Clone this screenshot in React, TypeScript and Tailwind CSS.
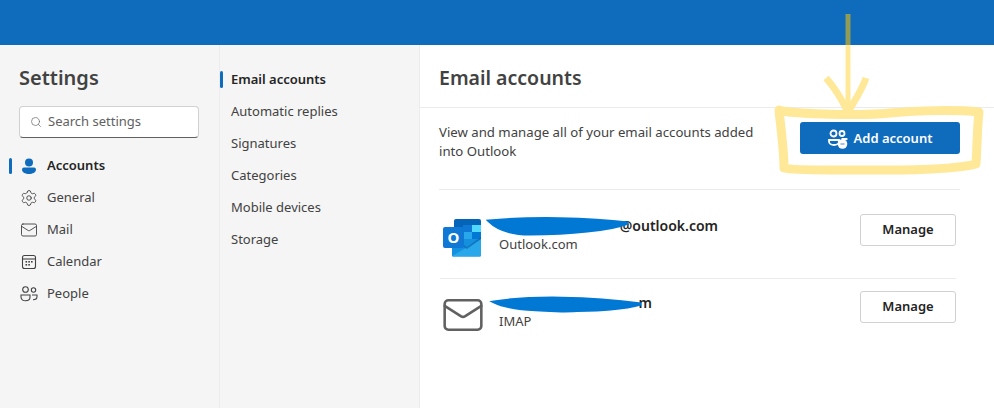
import { Search, Settings, Mail } from 'lucide-react'

const font = "font-['Noto_Sans',sans-serif]"

const CalendarIcon = () => (
  <svg viewBox="0 0 16 16" className="w-[16px] h-[16px]" fill="none" stroke="currentColor" strokeWidth="1.100">
    <rect x="1.500" y="1.500" width="13" height="13" rx="2" />
    <path d="M1.500 5 h13" />
    <g fill="currentColor" stroke="none">
      <rect x="4.500" y="7" width="1.600" height="1.600" />
      <rect x="7.300" y="7" width="1.600" height="1.600" />
      <rect x="10" y="7" width="1.600" height="1.600" />
      <rect x="4.500" y="10" width="1.600" height="1.600" />
      <rect x="7.300" y="10" width="1.600" height="1.600" />
    </g>
  </svg>
)

const PeopleIcon = () => (
  <svg viewBox="0 0 18 16" className="w-[18px] h-[16px]" fill="none" stroke="currentColor" strokeWidth="1.100">
    <circle cx="5.500" cy="3.500" r="2.800" />
    <circle cx="13.500" cy="4" r="2.200" />
    <path d="M1 9 h9 v2 c0 2.500-2 3.800-4.500 3.800 s-4.500-1.300-4.500-3.800 Z" />
    <path d="M12 9 h5 v1.500 c0 2-1.500 3.300-4 3.300" />
  </svg>
)

const mainNav = [
  { label: 'General', icon: <Settings className="w-[18px] h-[18px]" strokeWidth={1.200} /> },
  { label: 'Mail', icon: <Mail className="w-[18px] h-[18px]" strokeWidth={1.200} /> },
  { label: 'Calendar', icon: <CalendarIcon /> },
  { label: 'People', icon: <PeopleIcon /> }
]

const subNav = ['Automatic replies', 'Signatures', 'Categories', 'Mobile devices', 'Storage']

const OutlookLogo = () => (
  <svg viewBox="0 0 40 38" className="w-[40px] h-[38px] shrink-0">
    <rect x="11" y="0" width="27" height="20" rx="2" fill="#0364b8" />
    <rect x="20" y="6" width="9" height="7" fill="#0f78d4" />
    <rect x="29" y="6" width="9" height="7" fill="#50d9ff" />
    <rect x="20" y="13" width="9" height="7" fill="#28a8ea" />
    <rect x="29" y="13" width="9" height="7" fill="#0078d4" />
    <path d="M9 20 L38 20 L38 36 a1.500 1.500 0 0 1 -1.500 1.500 L10 37.500 L9 37 Z" fill="#1490df" />
    <path d="M9 37 L38 20 L38 36 a1.500 1.500 0 0 1 -1.500 1.500 L10 37.500 Z" fill="#28a8ea" />
    <path d="M11 20 L24 28 L38 18 L38 20 L24 30 L11 22 Z" fill="#0a5fa8" opacity="0.6" />
    <rect x="0" y="8" width="21" height="21" rx="2" fill="#0f78d4" />
    <text x="10.500" y="24" textAnchor="middle" fontSize="15" fontWeight="700" fill="#fff" fontFamily="Noto Sans, sans-serif">O</text>
  </svg>
)

const AddAccountIcon = () => (
  <svg viewBox="0 0 20 20" className="w-[20px] h-[20px]" fill="none">
    <circle cx="5.500" cy="4.500" r="3" stroke="#fff" strokeWidth="1.800" />
    <circle cx="14" cy="4.500" r="2.500" stroke="#fff" strokeWidth="1.800" />
    <path d="M1 11 h10 v1.500 c0 2-2.500 3.500-5 3.500 s-5-1.500-5-3.500 Z" stroke="#fff" strokeWidth="1.800" />
    <path d="M13.500 10 h5 v1" stroke="#fff" strokeWidth="1.800" />
    <circle cx="14.500" cy="15" r="4.800" fill="#fff" />
    <path d="M12.500 15 h4" stroke="#0f6cbd" strokeWidth="0.800" />
  </svg>
)

export default function App() {
  return (
    <div className={`${font} relative w-[994px] h-[408px] overflow-hidden bg-white text-[#424242]`}>
      <div className="h-[45px] bg-[#0f6cbd]" />
      <div className="flex h-[363px]">
        <aside className="w-[220px] bg-[#f5f5f5] border-r border-[#ececec] pt-[17px]">
          <h1 className="pl-[19px] text-[20px] leading-[32px] font-semibold text-[#424242]">Settings</h1>
          <div className="mt-[12px] ml-[19px] w-[180px] h-[32px] flex items-center bg-white border border-[#d1d1d1] border-b-[#616161] rounded-[4px] pl-[10px] gap-[6px] text-[13px] text-[#616161]">
            <Search className="w-[12px] h-[12px] text-[#707070]" strokeWidth={1.500} />
            Search settings
          </div>
          <nav className="mt-[12px] text-[13px]">
            <div className="relative h-[32px] flex items-center pl-[21px] gap-[10px] font-semibold text-[#242424]">
              <span className="absolute left-[9px] top-[8px] w-[3px] h-[16px] rounded-full bg-[#0f6cbd]" />
              <svg viewBox="0 0 16 16" className="w-[16px] h-[16px] text-[#0f6cbd]" fill="currentColor">
                <circle cx="8" cy="4.500" r="4" />
                <path d="M1 11.500 a2 2 0 0 1 2-2 h10 a2 2 0 0 1 2 2 c0 3-3.500 4.500-7 4.500 s-7-1.500-7-4.500 Z" />
              </svg>
              Accounts
            </div>
            {mainNav.map((item) => (
              <div key={item.label} className="h-[32px] flex items-center pl-[20px] text-[#424242]">
                <span className="w-[18px] flex justify-center">{item.icon}</span>
                <span className="ml-[9px]">{item.label}</span>
              </div>
            ))}
          </nav>
        </aside>

        <div className="w-[200px] bg-[#f5f5f5] border-r border-[#ececec] pt-[19px] text-[13px]">
          <div className="relative h-[32px] flex items-center pl-[11px] font-semibold text-[#242424]">
            <span className="absolute left-0 top-[7px] w-[3px] h-[17px] rounded-full bg-[#0f6cbd]" />
            Email accounts
          </div>
          {subNav.map((label) => (
            <div key={label} className="h-[32px] flex items-center pl-[11px]">
              {label}
            </div>
          ))}
        </div>

        <main className="flex-1">
          <div className="h-[63px] border-b border-[#ebebeb] pl-[19px] pt-[17px]">
            <h2 className="text-[19.500px] leading-[32px] font-semibold">Email accounts</h2>
          </div>
          <div className="ml-[19px] mr-[34px] h-[82px] border-b border-[#ebebeb] flex items-start justify-between">
            <p className="w-[330px] pt-[15px] text-[13.200px] leading-[19px]">
              View and manage all of your email accounts added into Outlook
            </p>
            <button className="mt-[14px] w-[160px] h-[32px] pt-[1px] rounded-[3px] bg-[#0f6cbd] text-white text-[13px] font-semibold flex items-center justify-center gap-[6px]">
              <AddAccountIcon />
              Add account
            </button>
          </div>
          <div className="ml-[20px] mr-[38px] h-[89px] border-b border-[#ebebeb] flex items-center">
            <div className="ml-[3px] w-[40px] mt-[7px]">
              <OutlookLogo />
            </div>
            <div className="ml-[16px] flex-1">
              <div className="text-[14px] leading-[20px] font-semibold text-right w-[219px] text-[#242424]">@outlook.com</div>
              <div className="text-[13px] leading-[16px]">Outlook.com</div>
            </div>
            <button className="w-[96px] h-[32px] mb-[9px] bg-white border border-[#d1d1d1] rounded-[3px] text-[13px] font-semibold text-[#242424]">Manage</button>
          </div>
          <div className="ml-[20px] mr-[38px] h-[76px] flex items-start">
            <Mail className="ml-[1px] mt-[14px] w-[44px] h-[44px] text-[#616161]" strokeWidth={1.400} />
            <div className="ml-[14px] flex-1 mt-[14px]">
              <div className="text-[14px] leading-[20px] font-semibold text-right w-[153px] text-[#242424]">m</div>
              <div className="text-[13px] leading-[16px]">IMAP</div>
            </div>
            <button className="mt-[12px] w-[96px] h-[32px] bg-white border border-[#d1d1d1] rounded-[3px] text-[13px] font-semibold text-[#242424]">Manage</button>
          </div>
        </main>
      </div>

      {/* hand drawn marks on top of the screenshot */}
      <svg viewBox="0 0 994 408" className="absolute inset-0 w-[994px] h-[408px] pointer-events-none" fill="none">
        <path d="M489 221 C530 217 590 218 628 223 C610 230 570 234 530 234 C510 234 497 229 489 221 Z" fill="#0078d4" stroke="#0078d4" strokeWidth="3" />
        <path d="M494 302 C530 296 590 297 641 304 C620 310 590 310 565 311 C540 310 510 310 494 302 Z" fill="#0078d4" stroke="#0078d4" strokeWidth="3" />
        <path d="M848 14 L848 45" stroke="#8f9b57" strokeWidth="5" />
        <path d="M848 45 L848 113" stroke="#ffe898" strokeWidth="5" />
        <path d="M826 78 C835 88 842 100 848 112 C855 100 862 90 866 78" stroke="#ffe898" strokeWidth="7" />
        <path d="M782 111 C800 114 860 116 890 113 C920 110 960 110 979 112 C977 130 977 150 976 164 C950 171 880 170 830 170 C810 170 792 170 784 168 C784 150 781 130 779 110 Z" stroke="#ffe898" strokeWidth="9" strokeLinejoin="round" />
      </svg>
    </div>
  )
}
